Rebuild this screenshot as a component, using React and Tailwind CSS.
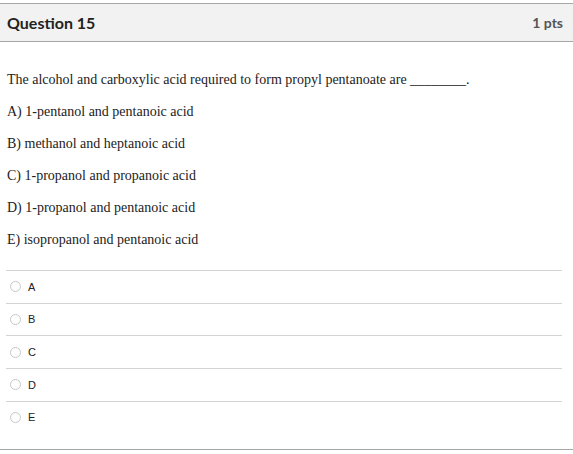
const choices = [
  'A) 1-pentanol and pentanoic acid',
  'B) methanol and heptanoic acid',
  'C) 1-propanol and propanoic acid',
  'D) 1-propanol and pentanoic acid',
  'E) isopropanol and pentanoic acid',
];

const answers = ['A', 'B', 'C', 'D', 'E'];

export default function App() {
  return (
    <div className="w-[573px] h-[454px] bg-white pt-[3px]">
      <div className="border-t border-b border-[#a6a6a6] h-[447px] flex flex-col">
        <div className="h-[38px] bg-[#f2f2f2] border-b border-[#a6a6a6] flex items-center justify-between px-[7px] shrink-0">
          <span className="font-['Lato','Liberation_Sans',sans-serif] font-bold text-[16px] text-[#222]">Question 15</span>
          <span className="font-['Lato','Liberation_Sans',sans-serif] font-bold text-[14px] text-[#555] pr-[3px]">1 pts</span>
        </div>

        <div className="pl-[7px] pr-[11px] pt-[28px] font-['Liberation_Serif',serif] text-[14px] text-[#222]">
          <p className="leading-[20px]">
            The alcohol and carboxylic acid required to form propyl pentanoate are ________.
          </p>
          {choices.map((c) => (
            <p key={c} className="leading-[20px] mt-[12px]">{c}</p>
          ))}
        </div>

        <div className="mt-[20px] ml-[6px] mr-[11px]">
          {answers.map((a) => (
            <div key={a} className="h-[32.7px] border-t border-[#d4d4d4] flex items-center gap-[7px] pl-[4px]">
              <span className="w-[11px] h-[11px] rounded-full border border-[#c8c8c8] bg-white"></span>
              <span className="font-['Liberation_Sans',sans-serif] text-[11px] text-[#222]">{a}</span>
            </div>
          ))}
        </div>
      </div>
    </div>
  );
}
